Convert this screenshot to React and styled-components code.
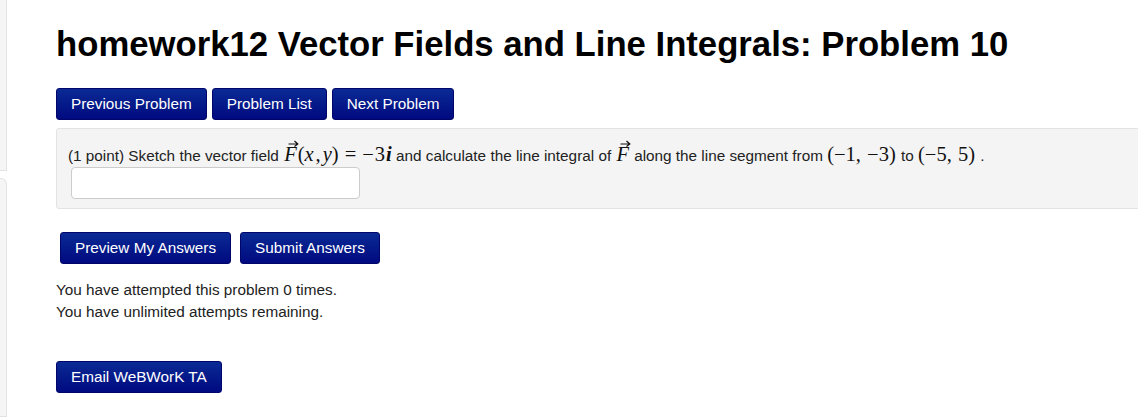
import React from 'react';
import styled, { createGlobalStyle } from 'styled-components';

const GlobalStyle = createGlobalStyle`
  html, body {
    margin: 0;
    padding: 0;
    background: #fff;
  }
  body {
    font-family: "Liberation Sans", Arial, sans-serif;
    font-size: 15.3px;
    color: #333;
  }
`;

const Page = styled.div`
  display: grid;
  grid-template-columns: 7px 1fr;
  min-height: 417px;
  overflow: hidden;
`;

const Sidebar = styled.div`
  display: flex;
  flex-direction: column;
  gap: 7px;
`;

const Well = styled.div`
  background: #f5f5f5;
  border: 1px solid #e3e3e3;
  border-left: none;
  height: ${(p) => p.h || 'auto'};
  flex: ${(p) => (p.grow ? 1 : 'none')};
  border-radius: ${(p) => (p.rounded ? '0 6px 0 0' : '0')};
  border-top: ${(p) => (p.rounded ? '1px solid #e3e3e3' : 'none')};
`;

const Main = styled.div`
  padding-left: 49px;
  padding-top: 24px;
`;

const Title = styled.h1`
  margin: 0 0 24px;
  font-family: "Liberation Sans", Arial, sans-serif;
  font-weight: bold;
  font-size: 34.7px;
  line-height: 40px;
  color: #000;
  white-space: nowrap;
`;

const ButtonRow = styled.div`
  display: flex;
  gap: ${(p) => p.gap || 5}px;
  margin-left: ${(p) => p.indent || 0}px;
  margin-top: ${(p) => p.top || 0}px;
`;

const NavButton = styled.button`
  height: 32px;
  padding: 0 14px;
  border: 1px solid #00056b;
  border-radius: 3px;
  background: linear-gradient(#0a2a94, #000a80);
  color: #fff;
  font-family: "Liberation Sans", Arial, sans-serif;
  font-size: 15.3px;
  cursor: pointer;
`;

const ProblemBox = styled.div`
  margin-top: 8px;
  margin-right: -20px;
  background: #f4f4f4;
  border: 1px solid #e3e3e3;
  border-radius: 3px;
  padding: 14px 11px 10px;
  height: 81px;
  box-sizing: border-box;
`;

const Statement = styled.div`
  line-height: 23px;
  color: #222;
  white-space: nowrap;
`;

const Math = styled.span`
  font-family: "Liberation Serif", "DejaVu Serif", serif;
  font-size: 20.5px;
  font-style: ${(p) => (p.upright ? 'normal' : 'italic')};
  font-weight: ${(p) => (p.bold ? 'bold' : 'normal')};
  margin: 0 ${(p) => p.space || 0}px;
  letter-spacing: ${(p) => p.track || 0}px;
  color: #111;
`;

const VecWrap = styled.span`
  position: relative;
  display: inline-block;
  font-family: "Liberation Serif", "DejaVu Serif", serif;
  font-style: italic;
  font-size: 20.5px;
  color: #111;
  padding: 0 1px 0 1px;
`;

const VecArrow = styled.svg`
  position: absolute;
  top: -3px;
  left: 5px;
  width: 11px;
  height: 7px;
`;

const Vec = ({ children }) => (
  <VecWrap>
    <VecArrow viewBox="0 0 11 7">
      <path d="M0.5 4 H9.5 M6.5 1 L9.8 4 L6.5 6.5" fill="none" stroke="#111" strokeWidth="1.2" />
    </VecArrow>
    {children}
  </VecWrap>
);

const AnswerInput = styled.input`
  display: block;
  margin: 0 0 0 3px;
  width: 289px;
  height: 32px;
  box-sizing: border-box;
  background: #fff;
  border: 1px solid #ccc;
  border-radius: 4px;
  padding: 4px 6px;
`;

const Attempts = styled.div`
  margin-top: 15px;
  line-height: 22px;
  color: #222;
`;

const EmailRow = styled.div`
  margin-top: 38px;
`;

export default function App() {
  return (
    <>
      <GlobalStyle />
      <Page>
        <Sidebar>
          <Well h="170px" />
          <Well grow rounded />
        </Sidebar>
        <Main>
          <Title>homework12 Vector Fields and Line Integrals: Problem 10</Title>
          <ButtonRow>
            <NavButton>Previous Problem</NavButton>
            <NavButton>Problem List</NavButton>
            <NavButton>Next Problem</NavButton>
          </ButtonRow>
          <ProblemBox>
            <Statement>
              (1 point) Sketch the vector field <Vec>F</Vec>
              <Math upright>(</Math>
              <Math>x</Math>
              <Math upright space={2}>,</Math>
              <Math>y</Math>
              <Math upright>)</Math>
              <Math upright space={6}>=</Math>
              <Math upright track={1}>−3</Math>
              <Math bold>i</Math> and calculate the line integral of <Vec>F</Vec> along the
              line segment from <Math upright>(−1,</Math>
              <Math upright space={1}> −3)</Math> to <Math upright>(−5,</Math>
              <Math upright space={1}> 5)</Math> .
            </Statement>
            <AnswerInput type="text" />
          </ProblemBox>
          <ButtonRow gap={9} indent={4} top={23}>
            <NavButton>Preview My Answers</NavButton>
            <NavButton>Submit Answers</NavButton>
          </ButtonRow>
          <Attempts>
            You have attempted this problem 0 times.
            <br />
            You have unlimited attempts remaining.
          </Attempts>
          <EmailRow>
            <NavButton>Email WeBWorK TA</NavButton>
          </EmailRow>
        </Main>
      </Page>
    </>
  );
}
